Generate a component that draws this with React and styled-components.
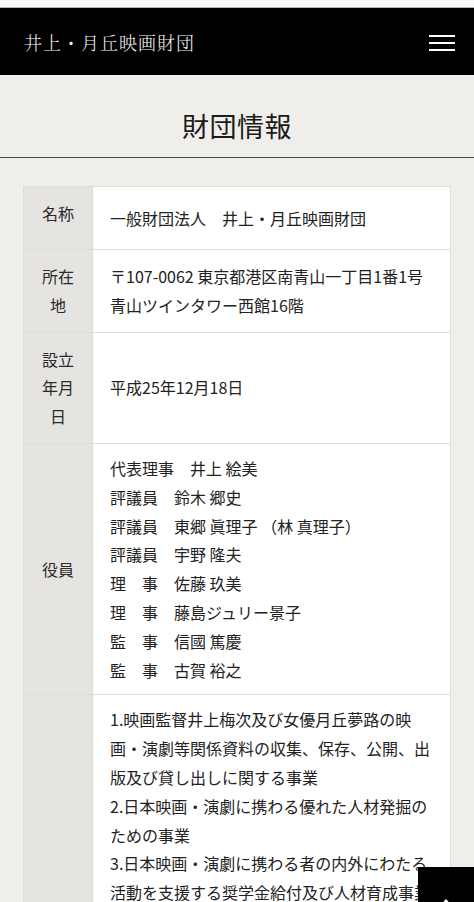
import React from "react";
import styled, { createGlobalStyle } from "styled-components";

const GlobalStyle = createGlobalStyle`
  * { box-sizing: border-box; }
  html, body {
    margin: 0;
    padding: 0;
    background: #efeeeb;
    font-family: "Noto Sans CJK JP", "Noto Sans", sans-serif;
    color: #222;
  }
`;

const officers = [
  ["代表理事", "井上 絵美"],
  ["評議員", "鈴木 郷史"],
  ["評議員", "東郷 眞理子 （林 真理子）"],
  ["評議員", "宇野 隆夫"],
  ["理　事", "佐藤 玖美"],
  ["理　事", "藤島ジュリー景子"],
  ["監　事", "信國 篤慶"],
  ["監　事", "古賀 裕之"],
];

const business = [
  "1.映画監督井上梅次及び女優月丘夢路の映画・演劇等関係資料の収集、保存、公開、出版及び貸し出しに関する事業",
  "2.日本映画・演劇に携わる優れた人材発掘のための事業",
  "3.日本映画・演劇に携わる者の内外にわたる活動を支援する奨学金給付及び人材育成事業",
  "4.日本映画・演劇の振興に関する調査研究及び普及啓発事業",
  "5.日本映画・演劇に関する上映会、講演会、展示会等の開催事業",
  "6.日本映画・演劇に関する国際交流の推進に関する事業",
  "7.その他この法人の目的を達成するために必要な事業",
];

export default function App() {
  return (
    <Page>
      <GlobalStyle />
      <TopStrip />
      <Header>
        <Logo>井上・月丘映画財団</Logo>
        <MenuButton aria-label="menu">
          <MenuLine />
          <MenuLine />
          <MenuLine />
        </MenuButton>
      </Header>

      <TitleBar>
        <h1>財団情報</h1>
      </TitleBar>

      <InfoTable>
        <Row>
          <Label>名称</Label>
          <Value>一般財団法人　井上・月丘映画財団</Value>
        </Row>
        <Row>
          <Label>所在地</Label>
          <Value>
            〒107-0062 東京都港区南青山一丁目1番1号
            <br />
            青山ツインタワー西館16階
          </Value>
        </Row>
        <Row>
          <Label>設立年月日</Label>
          <Value>平成25年12月18日</Value>
        </Row>
        <Row>
          <Label $middle>役員</Label>
          <Value>
            {officers.map(([role, name]) => (
              <Line key={name}>
                {role}　{name}
              </Line>
            ))}
          </Value>
        </Row>
        <Row>
          <Label $middle>事業</Label>
          <Value>
            {business.map((text) => (
              <Line key={text}>{text}</Line>
            ))}
          </Value>
        </Row>
      </InfoTable>

      <PageTop aria-label="page top">
        <Caret />
      </PageTop>
    </Page>
  );
}

const Page = styled.div`
  min-height: 100vh;
  padding-bottom: 60px;
`;

const TopStrip = styled.div`
  height: 8px;
  background: #f8f8f8;
  border-bottom: 1px solid #b5b5b5;
`;

const Header = styled.header`
  height: 67px;
  background: #000;
  display: flex;
  align-items: center;
  justify-content: space-between;
  padding: 0 19px 0 24px;
`;

const Logo = styled.div`
  color: #f2f2f2;
  font-family: "Noto Serif CJK JP", "Noto Sans CJK JP", serif;
  font-weight: 300;
  font-size: 18px;
  letter-spacing: 1px;
  margin-top: 1px;
`;

const MenuButton = styled.div`
  width: 26px;
  display: flex;
  flex-direction: column;
  gap: 5px;
  margin-top: 2px;
`;

const MenuLine = styled.span`
  display: block;
  height: 2px;
  background: #fff;
`;

const TitleBar = styled.div`
  padding: 31px 0 11px;
  border-bottom: 1px solid #4a4a4a;
  text-align: center;

  h1 {
    margin: 0;
    font-size: 27px;
    font-weight: 400;
    line-height: 40px;
    color: #1a1a1a;
    letter-spacing: 0.5px;
  }
`;

const InfoTable = styled.div`
  margin: 28px 23px 0;
  background: #fff;
  border: 1px solid #dcdcdc;
`;

const Row = styled.div`
  display: grid;
  grid-template-columns: 69px 1fr;
  min-height: 63px;
  border-bottom: 1px solid #dcdcdc;

  &:last-child {
    border-bottom: none;
  }
`;

const Label = styled.div`
  background: #e5e4e0;
  border-right: 1px solid #dcdcdc;
  padding: 12px 16px;
  text-align: center;
  font-size: 16px;
  line-height: 28.8px;
  color: #2a2a2a;
  display: flex;
  align-items: ${(p) => (p.$middle ? "center" : "flex-start")};
  justify-content: center;
`;

const Value = styled.div`
  padding: 10px 14px 10px 17px;
  font-size: 16px;
  line-height: 28.8px;
  color: #222;
  display: flex;
  flex-direction: column;
  justify-content: center;
  line-break: normal;
`;

const Line = styled.div``;

const PageTop = styled.div`
  position: fixed;
  right: 0;
  bottom: -21px;
  width: 56px;
  height: 56px;
  background: #000;
  display: flex;
  justify-content: center;
`;

const Caret = styled.span`
  margin-top: 34px;
  width: 8px;
  height: 8px;
  border-top: 2px solid #fff;
  border-left: 2px solid #fff;
  transform: rotate(45deg);
`;
